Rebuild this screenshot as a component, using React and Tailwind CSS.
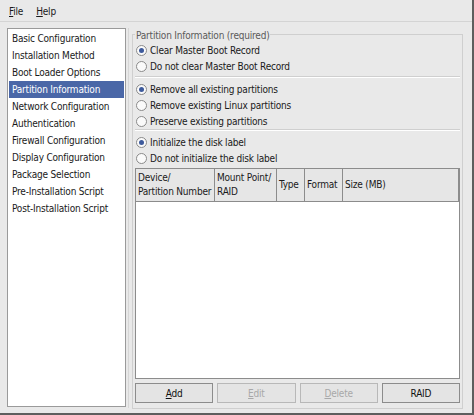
import React from "react";

const font = { fontFamily: "'DejaVu Sans Condensed', 'DejaVu Sans', sans-serif" };

function Radio({ checked, label }) {
  return (
    <div className="flex h-[16px] shrink-0 items-center">
      <span className="ml-[1px] flex h-[11px] w-[11px] shrink-0 items-center justify-center rounded-full border border-[#8a8a8a] bg-[#fafafa]">
        {checked && <span className="h-[5px] w-[5px] rounded-full bg-[#3d5a9c]" />}
      </span>
      <span className="ml-[3px] whitespace-nowrap text-[#1a1a1a]">{label}</span>
    </div>
  );
}

function Sep({ top, bottom }) {
  return <div className={"h-[2px] shrink-0 border-t border-[#cfcfcf] border-b border-b-white " + top + " " + bottom} />;
}

function Btn({ children, disabled }) {
  return (
    <div
      className={
        "flex h-[20px] items-center justify-center border bg-[#e4e4e4] " +
        (disabled ? "border-[#b8b8b8] text-[#a8a8a8]" : "border-[#8c8c8c] text-[#111]")
      }
    >
      {children}
    </div>
  );
}

function Head({ w, children }) {
  return (
    <div className={"flex items-center border-r border-[#8c8c8c] pl-[2px] whitespace-nowrap " + w}>
      <div>{children}</div>
    </div>
  );
}

export default function App() {
  const items = [
    "Basic Configuration",
    "Installation Method",
    "Boot Loader Options",
    "Partition Information",
    "Network Configuration",
    "Authentication",
    "Firewall Configuration",
    "Display Configuration",
    "Package Selection",
    "Pre-Installation Script",
    "Post-Installation Script",
  ];
  return (
    <div
      className="flex h-[415px] w-[474px] flex-col overflow-hidden border-r-2 border-b-2 border-[#5e5e5e] bg-[#e9e9e9] text-[10px] tracking-[-0.2px] text-[#1a1a1a]"
      style={font}
    >
      <div className="flex h-[22px] shrink-0 items-center gap-[13px] border-b border-[#d4d4d4] pt-[2px] pl-[9px]">
        <span><span className="underline">F</span>ile</span>
        <span><span className="underline">H</span>elp</span>
      </div>
      <div className="flex flex-1 pt-[6px] pl-[7px]">
        <div className="h-[379px] w-[119px] border border-[#9a9a9a] bg-white p-[1px]">
          {items.map((it, i) => (
            <div
              key={it}
              className={
                "flex h-[17px] items-center whitespace-nowrap pl-[3px] " +
                (i === 3 ? "bg-[#4a67a7] text-white" : "")
              }
            >
              {it}
            </div>
          ))}
        </div>
        <div className="ml-[1px] h-[380px] w-[2px] border-r border-[#d6d6d6]" />
        <div className="relative ml-[3px] mt-[6px] flex h-[375px] w-[331px] flex-col border border-[#cfcfcf] px-[2px] pt-[7px]">
          <span className="absolute -top-[7px] left-[2px] bg-[#e9e9e9] px-[1px] text-[#5a5a5a]">
            Partition Information (required)
          </span>
          <Radio checked label="Clear Master Boot Record" />
          <Radio label="Do not clear Master Boot Record" />
          <Sep top="mt-[2px]" bottom="mb-[3px]" />
          <Radio checked label="Remove all existing partitions" />
          <Radio label="Remove existing Linux partitions" />
          <Radio label="Preserve existing partitions" />
          <Sep top="mt-0" bottom="mb-[3px]" />
          <Radio checked label="Initialize the disk label" />
          <Radio label="Do not initialize the disk label" />
          <div className="mt-[2px] flex h-[211px] w-[325px] shrink-0 flex-col border border-[#8c8c8c] bg-white">
            <div className="flex h-[33px] border-b border-[#8c8c8c] bg-[#e6e6e6] leading-[14px]">
              <Head w="w-[79px]">Device/<br />Partition Number</Head>
              <Head w="w-[62px]">Mount Point/<br />RAID</Head>
              <Head w="w-[28px]">Type</Head>
              <Head w="w-[38px]">Format</Head>
              <Head w="flex-1">Size (MB)</Head>
            </div>
          </div>
          <div className="mt-[4px] grid w-[325px] grid-cols-4 gap-[4px]">
            <Btn><span><span className="underline">A</span>dd</span></Btn>
            <Btn disabled><span><span className="underline">E</span>dit</span></Btn>
            <Btn disabled><span><span className="underline">D</span>elete</span></Btn>
            <Btn>RAID</Btn>
          </div>
        </div>
      </div>
    </div>
  );
}
